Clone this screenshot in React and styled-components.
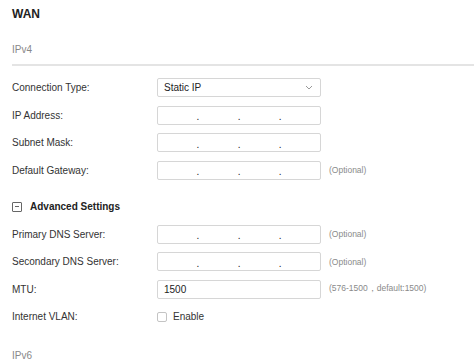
import React from "react";
import styled, { createGlobalStyle } from "styled-components";

const Global = createGlobalStyle`
  html, body {
    margin: 0;
    padding: 0;
    background: #fff;
  }
  body {
    font-family: "Liberation Sans", Arial, sans-serif;
    color: #333;
  }
`;

const Page = styled.div`
  width: 474px;
  height: 359px;
  overflow: hidden;
  padding-left: 12px;
  box-sizing: border-box;
`;

const Title = styled.div`
  height: 28px;
  line-height: 28px;
  font-size: 12px;
  font-weight: bold;
  color: #222;
`;

const SectionTab = styled.div`
  margin-top: ${(p) => p.$top || 0}px;
  height: 16px;
  line-height: 16px;
  font-size: 10px;
  color: #888;
`;

const Divider = styled.div`
  height: 2px;
  background: #e4e4e4;
  margin-top: 6px;
`;

const Form = styled.div`
  display: flex;
  flex-direction: column;
  gap: 8.5px;
  margin-top: 12px;
`;

const Row = styled.div`
  display: flex;
  align-items: center;
  height: 19px;
  margin-top: ${(p) => p.$top || 0}px;
`;

const Label = styled.div`
  width: 145px;
  font-size: 10px;
  color: #333;
`;

const Box = styled.div`
  width: 164px;
  height: 19px;
  box-sizing: border-box;
  border: 1px solid #d6d6d6;
  border-radius: 2px;
  display: flex;
  align-items: center;
  font-size: 10px;
  color: #222;
  background: #fff;
`;

const SelectBox = styled(Box)`
  justify-content: space-between;
  padding: 0 7px 0 6px;
`;

const TextBox = styled(Box)`
  padding-left: 6px;
`;

const Octet = styled.div`
  flex: 1;
  height: 100%;
`;

const Dot = styled.span`
  font-size: 10px;
  line-height: 10px;
  color: #222;
  margin-top: 4px;
`;

const Hint = styled.div`
  margin-left: 8px;
  font-size: 8.5px;
  color: #8a8a8a;
`;

const Toggle = styled.div`
  display: flex;
  align-items: center;
  gap: 8px;
  font-size: 10px;
  font-weight: bold;
  color: #222;
`;

const MinusBox = styled.div`
  width: 8px;
  height: 8px;
  border: 1px solid #666;
  border-radius: 1px;
  position: relative;
  &::after {
    content: "";
    position: absolute;
    left: 2px;
    right: 2px;
    top: 3.5px;
    height: 1px;
    background: #666;
  }
`;

const Check = styled.label`
  display: flex;
  align-items: center;
  gap: 6px;
  font-size: 10px;
  color: #333;
`;

const CheckSquare = styled.span`
  width: 10px;
  height: 10px;
  box-sizing: border-box;
  border: 1px solid #c4c4c4;
  border-radius: 2px;
`;

const IpBox = () => (
  <Box>
    <Octet />
    <Dot>.</Dot>
    <Octet />
    <Dot>.</Dot>
    <Octet />
    <Dot>.</Dot>
    <Octet />
  </Box>
);

const Chevron = () => (
  <svg width="8" height="5" viewBox="0 0 8 5">
    <path d="M1 1l3 3 3-3" fill="none" stroke="#999" strokeWidth="1" />
  </svg>
);

export default function App() {
  return (
    <>
      <Global />
      <Page>
        <Title>WAN</Title>
        <SectionTab $top={14}>IPv4</SectionTab>
        <Divider />
        <Form>
          <Row>
            <Label>Connection Type:</Label>
            <SelectBox>
              Static IP
              <Chevron />
            </SelectBox>
          </Row>
          <Row>
            <Label>IP Address:</Label>
            <IpBox />
          </Row>
          <Row>
            <Label>Subnet Mask:</Label>
            <IpBox />
          </Row>
          <Row>
            <Label>Default Gateway:</Label>
            <IpBox />
            <Hint>(Optional)</Hint>
          </Row>
          <Row $top={9}>
            <Toggle>
              <MinusBox />
              Advanced Settings
            </Toggle>
          </Row>
          <Row>
            <Label>Primary DNS Server:</Label>
            <IpBox />
            <Hint>(Optional)</Hint>
          </Row>
          <Row>
            <Label>Secondary DNS Server:</Label>
            <IpBox />
            <Hint>(Optional)</Hint>
          </Row>
          <Row>
            <Label>MTU:</Label>
            <TextBox>1500</TextBox>
            <Hint>(576-1500，default:1500)</Hint>
          </Row>
          <Row>
            <Label>Internet VLAN:</Label>
            <Check>
              <CheckSquare />
              Enable
            </Check>
          </Row>
        </Form>
        <SectionTab $top={22}>IPv6</SectionTab>
      </Page>
    </>
  );
}
